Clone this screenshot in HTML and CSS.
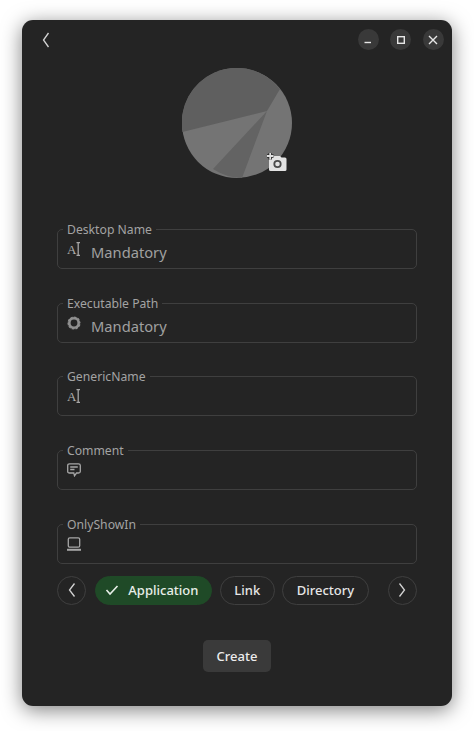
FILE: index.html
```html
<!DOCTYPE html>
<html lang="en">
<head>
    <meta charset="UTF-8">
    <meta name="viewport" content="width=device-width, initial-scale=1.0">
    <title>Create Desktop Entry</title>
    <link rel="stylesheet" href="styles.css">
</head>
<body>

    <div class="window">
        <div class="headerbar">
            <button class="back-btn" aria-label="Back">
                <svg width="10" height="16" viewBox="0 0 10 16"><path d="M7.5 1 L2.5 8 L7.5 15" class="chevron"/></svg>
            </button>
            <div class="window-controls">
                <button class="control-btn" aria-label="Minimize">
                    <svg width="10" height="10" viewBox="0 0 10 10"><path d="M1.5 7.5 H8" class="glyph"/></svg>
                </button>
                <button class="control-btn" aria-label="Maximize">
                    <svg width="10" height="10" viewBox="0 0 10 10"><rect x="1.7" y="1.7" width="6.6" height="6.6" class="glyph"/></svg>
                </button>
                <button class="control-btn" aria-label="Close">
                    <svg width="10" height="10" viewBox="0 0 10 10"><path d="M1 1 L9 9 M9 1 L1 9" class="glyph"/></svg>
                </button>
            </div>
        </div>

        <div class="avatar">
            <svg width="110" height="110" viewBox="0 0 110 110">
                <circle cx="55" cy="55" r="55" fill="#747474"/>
                <path d="M85 43 L98 21 A55 55 0 0 0 0.4 64 Z" fill="#5f5f5f"/>
                <path d="M85 43 L31 101 A55 55 0 0 0 60 110 Z" fill="#636363"/>
            </svg>
            <svg class="camera" width="20" height="18" viewBox="0 0 20 18">
                <path d="M2 6 Q2 4.500 3.500 4.500 H5.500 L7.500 3 H13 L14.500 4.500 H18 Q19.500 4.500 19.500 6 V16.500 Q19.500 18 18 18 H3.500 Q2 18 2 16.500 Z" fill="#e2e2e2"/>
                <path d="M0 3 H6.500 M3.200 0 V6.500" stroke="#242424" stroke-width="3.500" fill="none"/>
                <path d="M0 3 H6.500 M3.200 0 V6.500" stroke="#dedede" stroke-width="1.800" fill="none"/>
                <circle cx="10.500" cy="11" r="3.200" fill="none" stroke="#4a4a4a" stroke-width="1.800"/>
            </svg>
        </div>

        <form class="form-fields">
            <fieldset class="field">
                <legend>Desktop Name</legend>
                <div class="field-row">
                    <svg class="field-icon" width="14" height="14" viewBox="0 0 14 14">
                        <text x="0" y="11.500" class="icon-letter">A</text>
                        <path d="M9.500 .5 H13 M11.200 .5 V13.500 M9.500 13.500 H13" class="icon-line"/>
                    </svg>
                    <input type="text" placeholder="Mandatory">
                </div>
            </fieldset>

            <fieldset class="field">
                <legend>Executable Path</legend>
                <div class="field-row">
                    <svg class="field-icon" width="14" height="14" viewBox="0 0 14 14">
                        <circle cx="7" cy="7" r="5" fill="none" stroke="#8f8f8f" stroke-width="3.200"/>
                        <circle cx="7" cy="7" r="6.400" fill="none" stroke="#242424" stroke-width="1" stroke-dasharray="1.500 2.500"/>
                    </svg>
                    <input type="text" placeholder="Mandatory">
                </div>
            </fieldset>

            <fieldset class="field">
                <legend>GenericName</legend>
                <div class="field-row">
                    <svg class="field-icon" width="14" height="14" viewBox="0 0 14 14">
                        <text x="0" y="11.500" class="icon-letter">A</text>
                        <path d="M9.500 .5 H13 M11.200 .5 V13.500 M9.500 13.500 H13" class="icon-line"/>
                    </svg>
                    <input type="text">
                </div>
            </fieldset>

            <fieldset class="field">
                <legend>Comment</legend>
                <div class="field-row">
                    <svg class="field-icon" width="14" height="14" viewBox="0 0 14 14">
                        <path d="M2.500 .8 H11.500 Q13.300 .8 13.300 2.500 V8.500 Q13.300 10 11.500 10 H9.500 L7.500 12.800 L6.800 10 H2.500 Q.7 10 .7 8.500 V2.500 Q.7 .8 2.500 .8 Z" class="icon-line"/>
                        <path d="M3.200 4 H10.800 M3.200 6.500 H7.500" class="icon-line"/>
                    </svg>
                    <input type="text">
                </div>
            </fieldset>

            <fieldset class="field">
                <legend>OnlyShowIn</legend>
                <div class="field-row">
                    <svg class="field-icon" width="14" height="14" viewBox="0 0 14 14">
                        <rect x="1.300" y=".8" width="11.400" height="9.400" rx="1.500" class="icon-line"/>
                        <path d="M0 12.800 H14" class="icon-line icon-thick"/>
                    </svg>
                    <input type="text">
                </div>
            </fieldset>
        </form>

        <div class="type-row">
            <button class="round-btn" aria-label="Previous">
                <svg width="10" height="16" viewBox="0 0 10 16"><path d="M7.500 1.500 L2.500 8 L7.500 14.500" class="chevron"/></svg>
            </button>
            <div class="chips">
                <button class="chip chip-active">
                    <svg width="14" height="12" viewBox="0 0 14 12"><path d="M1.500 6 L5 10 L12.500 2" class="check"/></svg>
                    Application
                </button>
                <button class="chip">Link</button>
                <button class="chip">Directory</button>
            </div>
            <button class="round-btn" aria-label="Next">
                <svg width="10" height="16" viewBox="0 0 10 16"><path d="M2.500 1.500 L7.500 8 L2.500 14.500" class="chevron"/></svg>
            </button>
        </div>

        <button class="create-btn">Create</button>
    </div>

</body>
</html>
```

FILE: styles.css
```css
html {
    background: #fff;
}
body {
    box-sizing: border-box;
    min-height: 731px;
    margin: 0;
    padding: 20px 22px 25px;
    font-family: "Noto Sans", "Open Sans", sans-serif;
}
button {
    font-family: inherit;
    cursor: pointer;
}
.window {
    display: flex;
    flex-direction: column;
    box-sizing: border-box;
    width: 430px;
    height: 686px;
    padding: 0 35px;
    background: #242424;
    border-radius: 11px;
    box-shadow: 0 4px 20px rgba(0, 0, 0, 0.5);
}
.headerbar {
    display: flex;
    justify-content: space-between;
    align-items: center;
    height: 39px;
    margin: 0 -26.5px 0 -35px;
}
.back-btn {
    display: flex;
    margin-left: 19px;
    padding: 0;
    background: none;
    border: none;
}
.chevron {
    fill: none;
    stroke: #d4d4d4;
    stroke-width: 1.3;
}
.window-controls {
    display: flex;
    gap: 11.5px;
}
.control-btn {
    display: flex;
    align-items: center;
    justify-content: center;
    width: 21px;
    height: 21px;
    padding: 0;
    background: #393939;
    border: none;
    border-radius: 50%;
}
.glyph {
    fill: none;
    stroke: #e6e6e6;
    stroke-width: 1.4;
}
.avatar {
    position: relative;
    align-self: center;
    width: 110px;
    height: 110px;
    margin-top: 9px;
}
.avatar > svg {
    display: block;
}
.camera {
    position: absolute;
    left: 85px;
    bottom: 7px;
}
.form-fields {
    display: flex;
    flex-direction: column;
    gap: 26.75px;
    margin-top: 43.9px;
}
.field {
    box-sizing: border-box;
    height: 47px;
    min-width: 0;
    margin: 0;
    padding: 0 5px;
    border: 1px solid #3f3f3f;
    border-radius: 5px;
}
.field legend {
    padding: 0 4px;
    font-size: 12.2px;
    line-height: 15px;
    color: #a3a3a3;
}
.field-row {
    display: flex;
    align-items: flex-start;
    gap: 10px;
    padding: 5px 0 0 4px;
}
.field-icon {
    flex: none;
}
.icon-letter {
    font-family: "Liberation Serif", serif;
    font-size: 13px;
    fill: #b0b0b0;
}
.icon-line {
    fill: none;
    stroke: #a6a6a6;
    stroke-width: 1.3;
}
.icon-thick {
    stroke-width: 2;
}
.field input {
    flex: 1;
    min-width: 0;
    height: 20px;
    padding: 0;
    background: none;
    border: none;
    outline: none;
    font-family: inherit;
    font-size: 14.7px;
    color: #cfcfcf;
}
.field input::placeholder {
    color: #a0a0a0;
    opacity: 1;
}
.type-row {
    display: flex;
    justify-content: space-between;
    align-items: center;
    margin-top: 12px;
}
.round-btn {
    display: flex;
    align-items: center;
    justify-content: center;
    width: 29px;
    height: 29px;
    padding: 0;
    background: none;
    border: 1px solid #3f3f3f;
    border-radius: 50%;
}
.chips {
    display: flex;
    gap: 7.5px;
    margin-right: 10px;
}
.chip {
    display: flex;
    align-items: center;
    justify-content: center;
    gap: 9px;
    box-sizing: border-box;
    height: 29px;
    padding: 0 13.5px;
    background: none;
    border: 1px solid #3f3f3f;
    border-radius: 15px;
    font-size: 13px;
    font-weight: 500;
    color: #e6e6e6;
}
.chip-active {
    justify-content: flex-start;
    width: 117px;
    padding: 0 0 0 9px;
    background: #1f4a27;
    border-color: #1f4a27;
    color: #e8efe8;
}
.chip-active svg {
    flex: none;
}
.check {
    fill: none;
    stroke: #e8efe8;
    stroke-width: 1.6;
}
.create-btn {
    align-self: center;
    width: 68px;
    height: 32px;
    margin-top: 35px;
    padding: 0;
    background: #3a3a3a;
    border: none;
    border-radius: 5px;
    font-size: 13px;
    font-weight: 500;
    color: #ececec;
}
```
